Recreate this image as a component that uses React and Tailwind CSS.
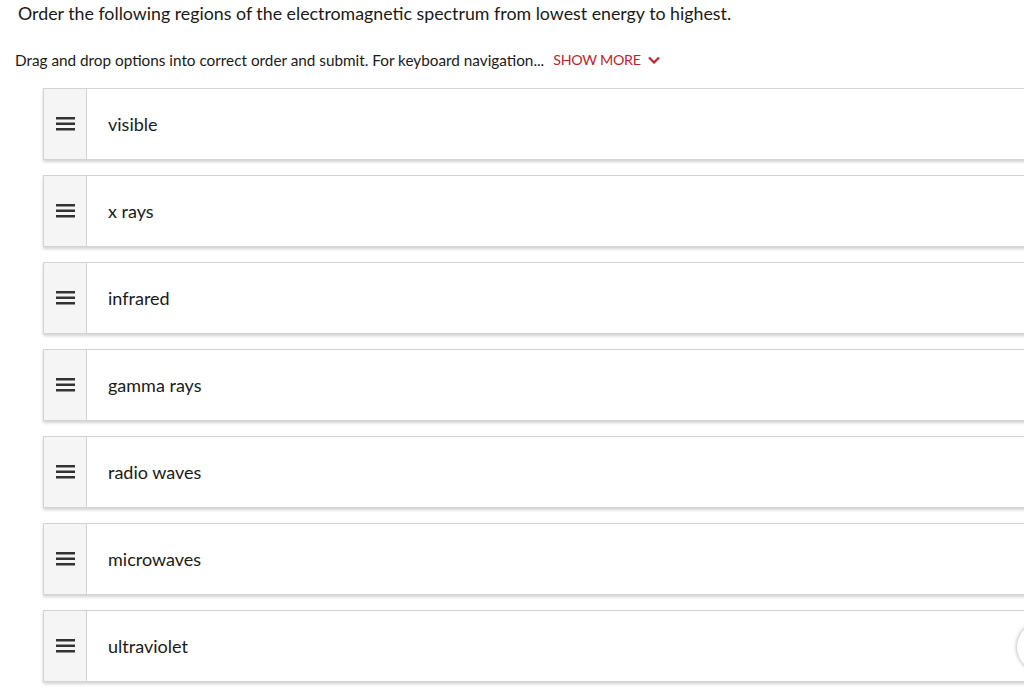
import React from 'react';

const items = ['visible', 'x rays', 'infrared', 'gamma rays', 'radio waves', 'microwaves', 'ultraviolet'];

function Handle() {
    return (
        <svg width="19" height="14" viewBox="0 0 19 14" aria-hidden="true">
            <rect x="0" y="0" width="19" height="2.5" fill="#333" />
            <rect x="0" y="5.5" width="19" height="2.5" fill="#333" />
            <rect x="0" y="11" width="19" height="2.5" fill="#333" />
        </svg>
    );
}

export default function App() {
    return (
        <div className="relative w-[1024px] h-[694px] overflow-hidden bg-white text-[#222]" style={{ fontFamily: 'Lato, "Noto Sans", sans-serif' }}>
            <h1 className="pl-[18px] pt-[1px] text-[17.8px] leading-[24px] text-[#1a1a1a]">
                Order the following regions of the electromagnetic spectrum from lowest energy to highest.
            </h1>
            <div className="pl-[15px] mt-[25px] flex items-center text-[15.3px] leading-[20px] text-[#1a1a1a]">
                <span>Drag and drop options into correct order and submit. For keyboard navigation...</span>
                <span className="ml-[9px] text-[14.3px] tracking-[-0.3px] text-[#c0232c] flex items-center gap-[7px]">
                    SHOW MORE
                    <svg width="12" height="8" viewBox="0 0 12 8" aria-hidden="true">
                        <path d="M1 1.5 L6 6.5 L11 1.5" fill="none" stroke="#c0232c" strokeWidth="2.2" />
                    </svg>
                </span>
            </div>
            <ul className="mt-[18px] ml-[43px] flex flex-col gap-[15px]">
                {items.map((item) => (
                    <li key={item} className="flex h-[72px] w-[1000px] border border-[#d4d4d4] bg-white shadow-[0_2px_3px_rgba(0,0,0,0.18)]">
                        <div className="w-[43px] shrink-0 bg-[#f5f5f5] border-r border-[#d4d4d4] flex items-center justify-center">
                            <Handle />
                        </div>
                        <div className="flex items-center pl-[21px] text-[18px] text-[#1a1a1a]">{item}</div>
                    </li>
                ))}
            </ul>
            <div className="absolute left-[1017px] top-[622px] w-[50px] h-[50px] rounded-full bg-white shadow-[0_0_4px_rgba(0,0,0,0.35)]"></div>
        </div>
    );
}
